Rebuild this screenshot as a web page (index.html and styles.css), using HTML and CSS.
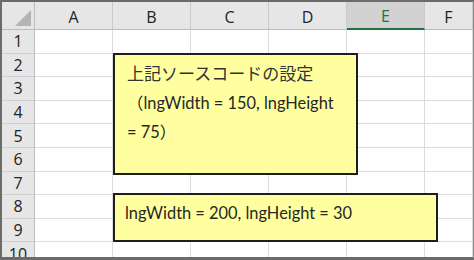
FILE: index.html
```html
<!DOCTYPE html>
<html>
<head>
	<title>Sheet1</title>
	<link rel="stylesheet" href="styles.css">
</head>
<body>
<div class="frame">
	<div class="sheet">
		<div class="corner"><span class="corner-mark"></span></div>
		<div class="col-head">A</div>
		<div class="col-head">B</div>
		<div class="col-head">C</div>
		<div class="col-head">D</div>
		<div class="col-head selected">E</div>
		<div class="col-head">F</div>

		<div class="row-head">1</div><div class="cell"></div><div class="cell"></div><div class="cell"></div><div class="cell"></div><div class="cell"></div><div class="cell"></div>
		<div class="row-head">2</div><div class="cell"></div><div class="cell"></div><div class="cell"></div><div class="cell"></div><div class="cell"></div><div class="cell"></div>
		<div class="row-head">3</div><div class="cell"></div><div class="cell"></div><div class="cell"></div><div class="cell"></div><div class="cell"></div><div class="cell"></div>
		<div class="row-head">4</div><div class="cell"></div><div class="cell"></div><div class="cell"></div><div class="cell"></div><div class="cell"></div><div class="cell"></div>
		<div class="row-head">5</div><div class="cell"></div><div class="cell"></div><div class="cell"></div><div class="cell"></div><div class="cell"></div><div class="cell"></div>
		<div class="row-head">6</div><div class="cell"></div><div class="cell"></div><div class="cell"></div><div class="cell"></div><div class="cell"></div><div class="cell"></div>
		<div class="row-head">7</div><div class="cell"></div><div class="cell"></div><div class="cell"></div><div class="cell"></div><div class="cell"></div><div class="cell"></div>
		<div class="row-head">8</div><div class="cell"></div><div class="cell"></div><div class="cell"></div><div class="cell"></div><div class="cell"></div><div class="cell"></div>
		<div class="row-head">9</div><div class="cell"></div><div class="cell"></div><div class="cell"></div><div class="cell"></div><div class="cell"></div><div class="cell"></div>
		<div class="row-head">10</div><div class="cell"></div><div class="cell"></div><div class="cell"></div><div class="cell"></div><div class="cell"></div><div class="cell"></div>
	</div>

	<!-- text boxes float over the cells -->
	<div class="shape shape-note">
		<div class="shape-line jp">上記ソースコードの設定</div>
		<div class="shape-line">（lngWidth = 150, lngHeight</div>
		<div class="shape-line">= 75）</div>
	</div>
	<div class="shape shape-bar">
		<div class="shape-line">lngWidth = 200, lngHeight = 30</div>
	</div>
</div>
</body>
</html>
```

FILE: styles.css
```css
* {box-sizing: border-box;}
body {margin: 0; background: #fff; font-family: "Open Sans", "Liberation Sans", "Noto Sans CJK JP", sans-serif;}

.frame {position: relative; width: 474px; height: 260px; overflow: hidden; background: #fff; border-top: 2px solid #6b6b6b; border-left: 2px solid #6b6b6b; border-bottom: 3px solid #6b6b6b; border-right: 1px solid #8a8a8a;}

.sheet {display: grid; grid-template-columns: 33px 78px 78px 78px 78px 78px 1fr; grid-template-rows: 28px; grid-auto-rows: 23.6px;}

.corner {position: relative; background: #e6e6e6; border-right: 1px solid #bdbdbd; border-bottom: 1px solid #bdbdbd;}
.corner-mark {position: absolute; right: 3px; bottom: 3px; width: 0; height: 0; border-left: 16px solid transparent; border-bottom: 16px solid #b4b4b4;}

.col-head {display: flex; align-items: center; justify-content: center; padding-top: 2px; background: #e6e6e6; border-right: 1px solid #c9c9c9; border-bottom: 1px solid #bdbdbd; color: #222; font-size: 16px;}
.col-head.selected {background: #d2d2d2; color: #217346; border-bottom: 2px solid #217346;}

.row-head {display: flex; align-items: center; justify-content: center; background: #e6e6e6; border-right: 1px solid #bdbdbd; border-bottom: 1px solid #cfcfcf; color: #222; font-size: 16px;}

.cell {border-right: 1px solid #dcdcdc; border-bottom: 1px solid #dcdcdc;}

.shape {position: absolute; background: #ffff9f; border: 2px solid #1e1e1e; color: #262626; font-size: 16.4px; line-height: 29px; white-space: nowrap;}
.shape-note {left: 111px; top: 51px; width: 245px; height: 122px; padding: 4px 0 0 12px;}
.shape-bar {left: 111px; top: 191px; width: 325px; height: 49px; padding: 3px 0 0 10px;}
.shape-line {font-family: Lato, "Noto Sans CJK JP", sans-serif;}
.shape-line.jp {font-size: 17px; color: #333;}
```
